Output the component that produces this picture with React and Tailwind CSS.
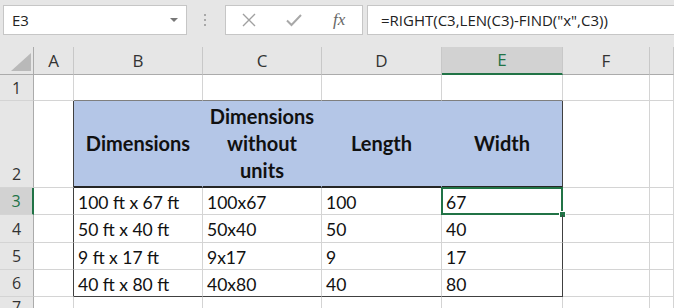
import React from "react";

const cols = ["A", "B", "C", "D", "E", "F", ""];

const data = [
  ["100 ft x 67 ft", "100x67", "100", "67"],
  ["50 ft x 40 ft", "50x40", "50", "40"],
  ["9 ft x 17 ft", "9x17", "9", "17"],
  ["40 ft x 80 ft", "40x80", "40", "80"],
];

function HeaderCell({ children, last }) {
  return (
    <div
      className={
        "flex items-center justify-center bg-[#b4c6e7] border-b-2 border-b-[#262626] border-r text-center font-bold leading-[27px] text-[20px] text-[#111] " +
        (last ? "border-r-[#404040]" : "border-r-[#b4c6e7]")
      }
    >
      {children}
    </div>
  );
}

function DataCell({ children, last, bottom, selected }) {
  return (
    <div
      className={
        "relative flex items-center pl-[4px] pt-[3px] leading-[20px] border-r border-b text-[17.5px] text-[#111] " +
        (last ? "border-r-[#404040] " : "border-r-[#d4d4d4] ") +
        (bottom ? "border-b-[#404040]" : "border-b-[#d4d4d4]")
      }
    >
      {children}
      {selected && (
        <>
          <div className="absolute left-[-1px] top-[-1px] right-[-1px] bottom-[-1px] border-2 border-[#217346]" />
          <div className="absolute right-[-4px] bottom-[-4px] w-[7px] h-[7px] bg-[#217346] border border-white" />
        </>
      )}
    </div>
  );
}

function Blank({ className = "" }) {
  return <div className={"border-r border-b border-[#d4d4d4] " + className} />;
}

function RowNum({ n, selected, tall }) {
  return (
    <div
      className={
        "flex justify-center border-b border-b-[#d4d4d4] text-[16px] leading-[22px] overflow-hidden " +
        (tall ? "items-end pb-[2px] " : "items-center ") +
        (selected
          ? "bg-[#d2d2d2] text-[#217346] border-r-2 border-r-[#217346]"
          : "bg-[#e6e6e6] text-[#333] border-r border-r-[#ababab]")
      }
      style={{ fontFamily: "'Open Sans', sans-serif" }}
    >
      {n}
    </div>
  );
}

export default function App() {
  return (
    <div
      className="w-[674px] h-[308px] overflow-hidden bg-white"
      style={{ fontFamily: "Lato, 'Liberation Sans', sans-serif" }}
    >
      {/* formula bar */}
      <div
        className="h-[47px] bg-[#e6e6e6] flex items-start pt-[5px]"
        style={{ fontFamily: "'Open Sans', sans-serif" }}
      >
        <div className="ml-[3px] w-[184px] h-[30px] bg-white border border-[#c6c6c6] flex items-center justify-between pl-[8px] pr-[8px] text-[15px] text-[#222]">
          <span>E3</span>
          <span className="w-0 h-0 border-l-[4px] border-r-[4px] border-t-[4px] border-l-transparent border-r-transparent border-t-[#777]" />
        </div>
        <div className="ml-[17px] mt-[9px] flex flex-col gap-[3px]">
          <span className="w-[2px] h-[2px] bg-[#a8a8a8]" />
          <span className="w-[2px] h-[2px] bg-[#a8a8a8]" />
          <span className="w-[2px] h-[2px] bg-[#a8a8a8]" />
        </div>
        <div className="ml-[19px] w-[138px] h-[30px] bg-white border border-[#c6c6c6] flex items-center">
          <svg width="14" height="14" viewBox="0 0 14 14" className="ml-[16px]">
            <path d="M1 1 L13 13 M13 1 L1 13" stroke="#a0a0a0" strokeWidth="1.4" />
          </svg>
          <svg width="16" height="14" viewBox="0 0 16 14" className="ml-[30px]">
            <path d="M1 7.5 L5.5 12 L15 2" stroke="#a8a8a8" strokeWidth="2" fill="none" />
          </svg>
          <span
            className="ml-[31px] italic text-[17px] text-[#666]"
            style={{ fontFamily: "'Liberation Serif', serif" }}
          >
            fx
          </span>
        </div>
        <div className="ml-[4px] flex-1 h-[30px] bg-white border border-[#c6c6c6] border-r-0 flex items-center pl-[13px] text-[15px] text-[#222] whitespace-nowrap">
          =RIGHT(C3,LEN(C3)-FIND("x",C3))
        </div>
      </div>

      {/* sheet */}
      <div className="grid grid-cols-[34px_40px_129px_119px_120px_121px_87px_1fr] grid-rows-[28px_26px_87px_27px_28px_27px_27px_20px]">
        {/* column headers */}
        <div className="bg-[#e6e6e6] border-b border-b-[#ababab] border-r border-r-[#ababab] relative">
          <svg width="24" height="20" viewBox="0 0 24 20" className="absolute left-[9px] top-[5px]">
            <polygon points="22,1 22,19 2,19" fill="#b9b9b9" />
          </svg>
        </div>
        {cols.map((c, i) => (
          <div
            key={i}
            className={
              "flex items-center justify-center text-[17px] border-r border-r-[#c8c8c8] " +
              (c === "E"
                ? "bg-[#d2d2d2] text-[#217346] border-b-2 border-b-[#217346]"
                : "bg-[#e6e6e6] text-[#333] border-b border-b-[#ababab]")
            }
            style={{ fontFamily: "'Open Sans', sans-serif" }}
          >
            {c}
          </div>
        ))}

        {/* row 1 */}
        <RowNum n="1" />
        <Blank />
        <Blank className="border-b-[#7f7f7f]" />
        <Blank className="border-b-[#7f7f7f]" />
        <Blank className="border-b-[#7f7f7f]" />
        <Blank className="border-b-[#7f7f7f]" />
        <Blank />
        <Blank />

        {/* row 2 */}
        <RowNum n="2" tall />
        <Blank className="border-r-[#404040]" />
        <HeaderCell>Dimensions</HeaderCell>
        <HeaderCell>
          Dimensions
          <br />
          without
          <br />
          units
        </HeaderCell>
        <HeaderCell>Length</HeaderCell>
        <HeaderCell last>Width</HeaderCell>
        <Blank />
        <Blank />

        {/* data rows */}
        {data.map((row, r) => (
          <React.Fragment key={r}>
            <RowNum n={String(r + 3)} selected={r === 0} />
            <Blank className="border-r-[#404040]" />
            {row.map((v, c) => (
              <DataCell key={c} last={c === 3} bottom={r === 3} selected={r === 0 && c === 3}>
                {v}
              </DataCell>
            ))}
            <Blank />
            <Blank />
          </React.Fragment>
        ))}

        {/* row 7 */}
        <RowNum n="7" />
        <Blank />
        <Blank />
        <Blank />
        <Blank />
        <Blank />
        <Blank />
        <Blank />
      </div>
    </div>
  );
}
